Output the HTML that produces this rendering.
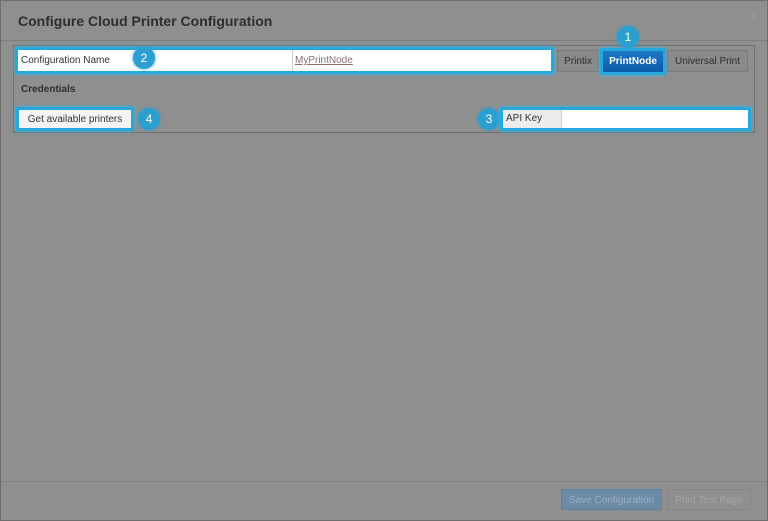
<!DOCTYPE html>
<html><head><style>
body{margin:0;width:768px;height:521px;background:#8d8d8d;font-family:"Liberation Sans",sans-serif;position:relative;overflow:hidden}
.a{position:absolute}
.dlg{left:0;top:0;width:766px;height:519px;border:1px solid #6e6e6e;background:#8f8f8f}
.title{left:18px;top:13px;font-size:14px;font-weight:bold;color:#2e2e2e}
.hl{border:3px solid #25a9dc;box-shadow:0 0 4px #3bb6e6;background:#fff;box-sizing:border-box}
.badge{width:22px;height:22px;border-radius:50%;background:#2a9fd0;color:#fff;font-size:12px;text-align:center;line-height:22px;box-shadow:0 0 3px #2a9fd0}
.btn{background:#8a8a8a;border:1px solid #7a7a7a;box-sizing:border-box;font-size:10px;color:#2f2f2f;text-align:center}
</style></head><body>
<div class="a dlg"></div>
<div class="a title">Configure Cloud Printer Configuration</div>
<div class="a" style="left:751px;top:9px;font-size:12px;color:#a0a0a0">×</div>
<div class="a" style="left:1px;top:40px;width:766px;height:1px;background:#7d7d7d"></div>
<div class="a" style="left:13px;top:45px;width:742px;height:88px;border:1px solid #6f6f6f;box-sizing:border-box"></div>
<div class="a hl" style="left:15px;top:47px;width:539px;height:27px"></div>
<div class="a" style="left:21px;top:55px;font-size:10px;color:#333">Configuration Name</div>
<div class="a" style="left:292px;top:50px;width:1px;height:21px;background:#ccc"></div>
<div class="a" style="left:295px;top:55px;font-size:10px;color:#8a6e72;text-decoration:underline">MyPrintNode</div>
<div class="a badge" style="left:133px;top:47px">2</div>
<div class="a btn" style="left:557px;top:50px;width:42px;height:22px;line-height:22px">Printix</div>
<div class="a hl" style="left:600px;top:48px;width:66px;height:27px;background:linear-gradient(#1e78c8,#0b5aa8);color:#fff;font-size:10px;font-weight:bold;text-align:center;line-height:22px">PrintNode</div>
<div class="a badge" style="left:617px;top:26px">1</div>
<div class="a btn" style="left:667px;top:50px;width:81px;height:22px;line-height:22px">Universal Print</div>
<div class="a" style="left:21px;top:84px;font-size:10px;font-weight:bold;color:#2f2f2f">Credentials</div>
<div class="a hl" style="left:16px;top:107px;width:118px;height:24px;font-size:10px;color:#333;text-align:center;line-height:20px;background:#f4f4f4">Get available printers</div>
<div class="a badge" style="left:138px;top:108px">4</div>
<div class="a badge" style="left:478px;top:108px">3</div>
<div class="a hl" style="left:500px;top:107px;width:251px;height:24px"></div>
<div class="a" style="left:503px;top:110px;width:58px;height:18px;background:#ececec;border-right:1px solid #ccc"></div>
<div class="a" style="left:506px;top:113px;font-size:10px;color:#333">API Key</div>
<div class="a" style="left:1px;top:481px;width:766px;height:1px;background:#7f7f7f"></div>
<div class="a" style="left:561px;top:489px;width:101px;height:21px;background:#6a8aa6;border:1px solid #607f99;box-sizing:border-box;font-size:10px;color:#9fb2c3;text-align:center;line-height:21px">Save Configuration</div>
<div class="a" style="left:667px;top:489px;width:84px;height:21px;border:1px solid #858585;box-sizing:border-box;font-size:10px;color:#a5a5a5;text-align:center;line-height:21px">Print Test Page</div>
</body></html>
